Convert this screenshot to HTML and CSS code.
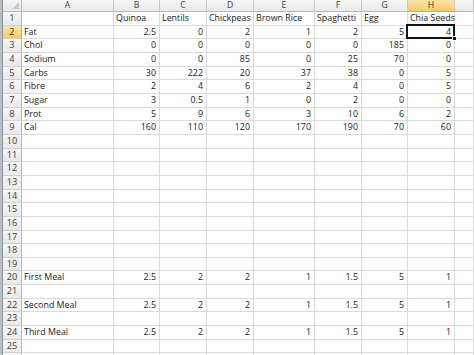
FILE: index.html
```html
<!DOCTYPE html>
<html lang="en">
<head>
  <meta charset="UTF-8" />
  <title>Meal Plan</title>
  <link rel="stylesheet" href="styles.css">
</head>
<body>
<div class="window">
  <div class="edge"></div>
  <div class="sheet">
    <!-- column headers -->
    <div class="corner"></div><div class="ch">A</div><div class="ch">B</div><div class="ch">C</div><div class="ch">D</div><div class="ch">E</div><div class="ch">F</div><div class="ch">G</div><div class="ch on">H</div><div class="ch"></div>

    <div class="rh">1</div><div class="c"></div><div class="c">Quinoa</div><div class="c">Lentils</div><div class="c">Chickpeas</div><div class="c">Brown Rice</div><div class="c">Spaghetti</div><div class="c">Egg</div><div class="c">Chia Seeds</div><div class="c"></div>
    <div class="rh on">2</div><div class="c">Fat</div><div class="c n">2.5</div><div class="c n">0</div><div class="c n">2</div><div class="c n">1</div><div class="c n">2</div><div class="c n">5</div><div class="c n active">4<span class="sel"><span class="handle"></span></span></div><div class="c"></div>
    <div class="rh">3</div><div class="c">Chol</div><div class="c n">0</div><div class="c n">0</div><div class="c n">0</div><div class="c n">0</div><div class="c n">0</div><div class="c n">185</div><div class="c n">0</div><div class="c"></div>
    <div class="rh">4</div><div class="c">Sodium</div><div class="c n">0</div><div class="c n">0</div><div class="c n">85</div><div class="c n">0</div><div class="c n">25</div><div class="c n">70</div><div class="c n">0</div><div class="c"></div>
    <div class="rh">5</div><div class="c">Carbs</div><div class="c n">30</div><div class="c n">222</div><div class="c n">20</div><div class="c n">37</div><div class="c n">38</div><div class="c n">0</div><div class="c n">5</div><div class="c"></div>
    <div class="rh">6</div><div class="c">Fibre</div><div class="c n">2</div><div class="c n">4</div><div class="c n">6</div><div class="c n">2</div><div class="c n">4</div><div class="c n">0</div><div class="c n">5</div><div class="c"></div>
    <div class="rh">7</div><div class="c">Sugar</div><div class="c n">3</div><div class="c n">0.5</div><div class="c n">1</div><div class="c n">0</div><div class="c n">2</div><div class="c n">0</div><div class="c n">0</div><div class="c"></div>
    <div class="rh">8</div><div class="c">Prot</div><div class="c n">5</div><div class="c n">9</div><div class="c n">6</div><div class="c n">3</div><div class="c n">10</div><div class="c n">6</div><div class="c n">2</div><div class="c"></div>
    <div class="rh">9</div><div class="c">Cal</div><div class="c n">160</div><div class="c n">110</div><div class="c n">120</div><div class="c n">170</div><div class="c n">190</div><div class="c n">70</div><div class="c n">60</div><div class="c"></div>

    <div class="rh">10</div><div class="c"></div><div class="c"></div><div class="c"></div><div class="c"></div><div class="c"></div><div class="c"></div><div class="c"></div><div class="c"></div><div class="c"></div>
    <div class="rh">11</div><div class="c"></div><div class="c"></div><div class="c"></div><div class="c"></div><div class="c"></div><div class="c"></div><div class="c"></div><div class="c"></div><div class="c"></div>
    <div class="rh">12</div><div class="c"></div><div class="c"></div><div class="c"></div><div class="c"></div><div class="c"></div><div class="c"></div><div class="c"></div><div class="c"></div><div class="c"></div>
    <div class="rh">13</div><div class="c"></div><div class="c"></div><div class="c"></div><div class="c"></div><div class="c"></div><div class="c"></div><div class="c"></div><div class="c"></div><div class="c"></div>
    <div class="rh">14</div><div class="c"></div><div class="c"></div><div class="c"></div><div class="c"></div><div class="c"></div><div class="c"></div><div class="c"></div><div class="c"></div><div class="c"></div>
    <div class="rh">15</div><div class="c"></div><div class="c"></div><div class="c"></div><div class="c"></div><div class="c"></div><div class="c"></div><div class="c"></div><div class="c"></div><div class="c"></div>
    <div class="rh">16</div><div class="c"></div><div class="c"></div><div class="c"></div><div class="c"></div><div class="c"></div><div class="c"></div><div class="c"></div><div class="c"></div><div class="c"></div>
    <div class="rh">17</div><div class="c"></div><div class="c"></div><div class="c"></div><div class="c"></div><div class="c"></div><div class="c"></div><div class="c"></div><div class="c"></div><div class="c"></div>
    <div class="rh">18</div><div class="c"></div><div class="c"></div><div class="c"></div><div class="c"></div><div class="c"></div><div class="c"></div><div class="c"></div><div class="c"></div><div class="c"></div>
    <div class="rh">19</div><div class="c"></div><div class="c"></div><div class="c"></div><div class="c"></div><div class="c"></div><div class="c"></div><div class="c"></div><div class="c"></div><div class="c"></div>

    <div class="rh">20</div><div class="c">First Meal</div><div class="c n">2.5</div><div class="c n">2</div><div class="c n">2</div><div class="c n">1</div><div class="c n">1.5</div><div class="c n">5</div><div class="c n">1</div><div class="c"></div>
    <div class="rh">21</div><div class="c"></div><div class="c"></div><div class="c"></div><div class="c"></div><div class="c"></div><div class="c"></div><div class="c"></div><div class="c"></div><div class="c"></div>
    <div class="rh">22</div><div class="c">Second Meal</div><div class="c n">2.5</div><div class="c n">2</div><div class="c n">2</div><div class="c n">1</div><div class="c n">1.5</div><div class="c n">5</div><div class="c n">1</div><div class="c"></div>
    <div class="rh">23</div><div class="c"></div><div class="c"></div><div class="c"></div><div class="c"></div><div class="c"></div><div class="c"></div><div class="c"></div><div class="c"></div><div class="c"></div>
    <div class="rh">24</div><div class="c">Third Meal</div><div class="c n">2.5</div><div class="c n">2</div><div class="c n">2</div><div class="c n">1</div><div class="c n">1.5</div><div class="c n">5</div><div class="c n">1</div><div class="c"></div>
    <div class="rh">25</div><div class="c"></div><div class="c"></div><div class="c"></div><div class="c"></div><div class="c"></div><div class="c"></div><div class="c"></div><div class="c"></div><div class="c"></div>
    <div class="rh"></div><div class="c"></div><div class="c"></div><div class="c"></div><div class="c"></div><div class="c"></div><div class="c"></div><div class="c"></div><div class="c"></div><div class="c"></div>
  </div>
</div>
</body>
</html>
```

FILE: styles.css
```css
/* Basic reset */
* { margin: 0; padding: 0; box-sizing: border-box; }
html, body { width: 474px; height: 355px; overflow: hidden; background: #fff; }
body { font-family: "Open Sans", "Noto Sans", sans-serif; font-size: 8.9px; color: #1a1a1a; }

.window { display: flex; height: 100%; }
.edge { width: 3px; flex: none; background: #b9bec6; border-right: 1px solid #8e949c; }

/* Grid of cells */
.sheet {
  flex: 1;
  display: grid;
  grid-template-columns: 19px 92px 46px 47px 47px 61px 47px 46px 47px 1fr;
  grid-template-rows: 12px;
  grid-auto-rows: 13.67px;
  align-content: start;
}
.c, .rh, .ch, .corner {
  border-right: 1px solid #d8dadb;
  border-bottom: 1px solid #d8dadb;
  white-space: nowrap;
  overflow: visible;
  line-height: 12.8px;
}
.c { padding: 0 2px; }
.c.n { text-align: right; padding-right: 3px; }

/* Headers */
.corner, .ch, .rh { background: linear-gradient(#f6f6f6, #e9e9e9); color: #3b3b3b; }
.corner { border-right-color: #b7b7b7; border-bottom-color: #b7b7b7; position: relative; }
.corner::after {
  content: ""; position: absolute; right: 2px; bottom: 2px;
  border-left: 7px solid transparent; border-bottom: 7px solid #c9c9c9;
}
.ch { text-align: center; line-height: 11px; font-size: 8.6px; border-right-color: #c8c8c8; border-bottom-color: #b7b7b7; }
.rh { text-align: center; font-size: 9.2px; border-right-color: #b7b7b7; border-bottom-color: #d0d0d0; }
.ch.on { background: linear-gradient(#fbe4a5, #f5cc6e); border-bottom: 1px solid #e9a33a; color: #333; }
.rh.on { background: linear-gradient(#fbe4a5, #f5cc6e); border-right: 1px solid #e9a33a; color: #333; }

/* Active cell */
.active { position: relative; }
.sel {
  position: absolute; left: -2px; top: -2px; right: -1px; bottom: -1px;
  border: 2px solid #111;
}
.handle {
  position: absolute; right: -4px; bottom: -4px;
  width: 5px; height: 5px; background: #111; border: 1px solid #fff;
}
```
